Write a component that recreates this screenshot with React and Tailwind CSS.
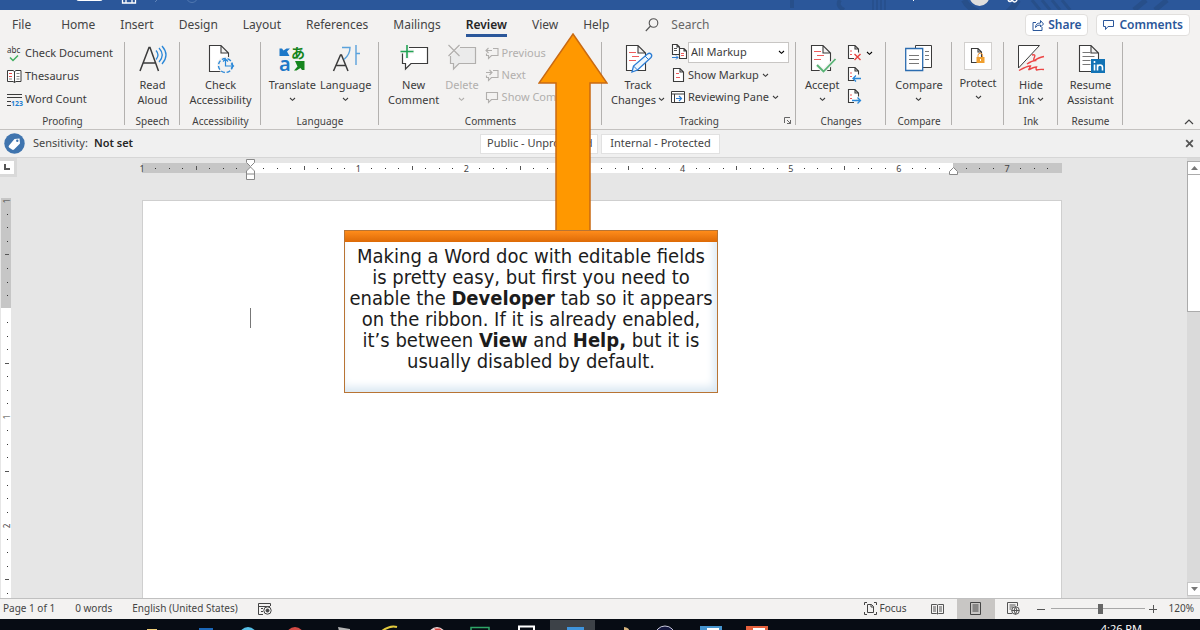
import React from "react";

const ic = "block shrink-0 overflow-visible";

const Chevron = ({ className = "" }) => (
  <svg className={"block shrink-0 " + className} width="7" height="5" viewBox="0 0 7 5" fill="none" stroke="currentColor" strokeWidth="1.1">
    <path d="M1 1l2.5 2.3L6 1" />
  </svg>
);

const Page = ({ x = 0, y = 0, w = 20, h = 26, f = 8, fill = "#fff" }) => (
  <path
    d={`M${x + 0.5} ${y + 0.5}H${x + w - f}L${x + w - 0.5} ${y + f}V${y + h - 0.5}H${x + 0.5}ZM${x + w - f} ${y + 0.5}V${y + f}H${x + w - 0.5}`}
    fill={fill}
    stroke="#3b3b3b"
    strokeWidth="1.1"
  />
);

const Bubble = () => <path d="M1.5 2.5h11v7h-6l-3 3v-3h-2z" />;

const SpellIcon = () => (
  <svg className={ic} width="15" height="16" viewBox="0 0 15 16">
    <text x="0" y="7" fontSize="8" fill="#333" fontFamily="Noto Sans, sans-serif">abc</text>
    <path d="M3 11.5l3 3 5-5" fill="none" stroke="#3fae5f" strokeWidth="1.5" />
  </svg>
);
const BookIcon = () => (
  <svg className={ic} width="15" height="16" viewBox="0 0 15 16" fill="none" stroke="#3b3b3b">
    <path d="M.5 1.500h5.500l1.500 1 1.500-1h5v11h-5l-1.500 1-1.500-1H.5zM7.500 2.500v11" fill="#fff" />
    <path d="M2 4.500h3M2 7.500h3" stroke="#e34b4b" />
    <path d="M9.500 4.500h3M9.500 7.500h3M9.500 10h3M2 10h3" stroke="#888" />
  </svg>
);
const CountIcon = () => (
  <svg className={ic} width="15" height="16" viewBox="0 0 15 16">
    <path d="M0 2.500h15M0 5.500h15M0 9.500h4M0 13.500h4" stroke="#3b3b3b" />
    <text x="4" y="14" fontSize="7" fontWeight="700" fill="#1e7fd0" fontFamily="Noto Sans, sans-serif">123</text>
  </svg>
);
const ReadIcon = () => (
  <svg className={ic} width="28" height="30" viewBox="0 0 28 30" fill="none">
    <path d="M1 27L10 3.500h1L19.500 27M4.500 19h12" stroke="#3b3b3b" strokeWidth="1.500" />
    <path d="M17 6.500q4 4.500 0 9M20 4q6.500 7 0 14M23 2q8 9 0 18" stroke="#2b88d8" strokeWidth="1.300" />
  </svg>
);
const AccessIcon = () => (
  <svg className={ic} width="28" height="30" viewBox="0 0 28 30" fill="none">
    <Page x={2} y={1} w={20} h={27} />
    <circle cx="18.500" cy="21" r="8.500" fill="#f3f2f1" />
    <circle cx="18.500" cy="21.500" r="7" stroke="#2b88d8" strokeWidth="1.400" strokeDasharray="4 1.800" />
    <path d="M18.500 15v7h8M24 19.500l2.500 2.500L24 24.500M16 17.500l2.500-2.500 2.500 2.500" stroke="#2b88d8" strokeWidth="1.200" />
  </svg>
);
const TranslateIcon = () => (
  <svg className={ic} width="28" height="30" viewBox="0 0 28 30">
    <path d="M1.500 4.500h2.500l1.500 2 3-2H12l-3 3 2.500 4.500H1.500z" fill="#1e78c8" />
    <text x="1" y="27" fontSize="20" fontWeight="600" fill="#1e78c8" fontFamily="Noto Sans, sans-serif">a</text>
    <text x="13" y="14" fontSize="14" fontWeight="700" fill="#16851d" fontFamily="Noto Sans CJK JP, sans-serif">あ</text>
    <path d="M17 17h9.500v9h-2.500l-1.500-2-4 2.500h-2.500l3.500-4z" fill="#16851d" />
  </svg>
);
const LanguageIcon = () => (
  <svg className={ic} width="28" height="30" viewBox="0 0 28 30" fill="none">
    <path d="M1.500 27L8.500 11h1L16 27M4 21.500h10" stroke="#3b3b3b" strokeWidth="1.500" />
    <path d="M10 3.500h8q0 7-6 12M24 1v20M24 9.500h4" stroke="#5aa2dc" strokeWidth="1.400" />
  </svg>
);
const NewCommentIcon = () => (
  <svg className={ic} width="30" height="30" viewBox="0 0 30 30" fill="none">
    <path d="M3.500 6.500V19.500H6.500V25L12 19.500H28.500V3.500H9" stroke="#3b3b3b" strokeWidth="1.200" fill="#fff" />
    <path d="M8 0.500v14M1 7.500h14" stroke="#f3f2f1" strokeWidth="4" />
    <path d="M8 1v13M1.500 7.500h13" stroke="#22a355" strokeWidth="1.600" />
  </svg>
);
const DeleteIcon = () => (
  <svg className={ic} width="30" height="30" viewBox="0 0 30 30" fill="none" stroke="#b1afad" strokeWidth="1.200">
    <path d="M3.500 12V19.500H6.500V25L12 19.500H28.500V3.500H13" fill="#ebebeb" />
    <path d="M1.500 1l11 11M12.500 1l-11 11" />
  </svg>
);
const SmallBubble = ({ kind }) => (
  <svg className={ic} width="14" height="15" viewBox="0 0 14 15" fill="none" stroke="#b1afad" strokeWidth="1.100">
    {kind === "show" ? (
      <Bubble />
    ) : (
      <path d="M8 2.500h5v7H6.500l-3 3v-3h-2v-2" />
    )}
    {kind === "prev" && <path d="M1 4.500h6M3.500 2L1 4.500 3.500 7" />}
    {kind === "next" && <path d="M1 4.500h6M4.500 2L7 4.500 4.500 7" />}
  </svg>
);
const TrackIcon = () => (
  <svg className={ic} width="28" height="30" viewBox="0 0 28 30" fill="none">
    <Page x={2} y={1} w={20} h={26} />
    <path d="M5 8.500h7M8 12.500h7M5 16.500h7" stroke="#ee5c5c" />
    <path d="M8 28l1.500-6L23.500 10q2-1.500 3.500 0t0 3.500L13.500 26z" fill="#eef6fd" stroke="#2b7cd3" strokeWidth="1.300" />
    <path d="M9.500 22l4 4M21 12l4 4" stroke="#2b7cd3" />
  </svg>
);
const MarkupIcon = () => (
  <svg className={ic} width="16" height="18" viewBox="0 0 16 18" fill="none">
    <g transform="translate(0 2)">
      <Page x={1} y={0} w={8} h={11} f={3} />
      <path d="M3 4.500h3M3 6.500h3" stroke="#555" />
      <Page x={8} y={4} w={8} h={11} f={3} />
      <path d="M10 9.500h3M10 11.500h3" stroke="#ee5c5c" />
      <path d="M1 13.500h6M5 11.500l2 2-2 2" stroke="#2b7cd3" />
    </g>
  </svg>
);
const ShowIcon = () => (
  <svg className={ic} width="14" height="16" viewBox="0 0 14 16" fill="none">
    <Page x={2} y={1} w={11} h={14} f={4} />
    <path d="M5 6.500h3M5 10.500h4" stroke="#ee5c5c" />
  </svg>
);
const PaneIcon = () => (
  <svg className={ic} width="14" height="16" viewBox="0 0 14 16" fill="none">
    <path d="M.5 2.500h13v11H.5z" fill="#fff" stroke="#3b3b3b" />
    <path d="M.5 5h13M3.500 5v8.500" stroke="#3b3b3b" />
    <path d="M5 9.500h5M8 7l2.500 2.500L8 12" stroke="#2b7cd3" strokeWidth="1.200" />
  </svg>
);
const AcceptIcon = () => (
  <svg className={ic} width="28" height="30" viewBox="0 0 28 30" fill="none">
    <Page x={3} y={1} w={20} h={26} />
    <path d="M6 7.500h7M9 11.500h7M6 15.500h7" stroke="#ee5c5c" />
    <path d="M9 21l6.500 6.500L27.500 15" stroke="#f3f2f1" strokeWidth="4" />
    <path d="M9 21l6.500 6.500L27.500 15" stroke="#57b374" strokeWidth="1.800" />
  </svg>
);
const ChangeIcon = ({ kind }) => (
  <svg className={ic} width="15" height="16" viewBox="0 0 15 16" fill="none">
    <path d="M7 13.500H1.500V.5H8L11.500 4V7.500M8 .5V4h3.500" fill="#fff" stroke="#3b3b3b" strokeWidth="1.100" />
    <path d="M3 6h2M3 9.500h2" stroke="#ee5c5c" />
    {kind === "x" && <path d="M7.500 9l6 6M13.500 9l-6 6" stroke="#e8423f" strokeWidth="1.400" />}
    {kind === "l" && <path d="M14 11.500H6M9 8.500l-3 3 3 3" stroke="#2b88d8" strokeWidth="1.300" />}
    {kind === "r" && <path d="M5 11.500h8.500M10.500 8.500l3 3-3 3" stroke="#2b88d8" strokeWidth="1.300" />}
  </svg>
);
const CompareIcon = () => (
  <svg className={ic} width="28" height="30" viewBox="0 0 28 30" fill="none">
    <path d="M10.500 1.500h16v22h-16z" fill="#fff" stroke="#3b3b3b" />
    <path d="M20 7.500h4M20 11.500h4M20 15.500h4" stroke="#777" />
    <path d="M.7 4.500h17v22H.7z" fill="#fff" stroke="#2b6cb0" strokeWidth="1.300" />
    <path d="M4 11.500h10M4 15.500h10M4 19.500h10" stroke="#777" />
  </svg>
);
const ProtectIcon = () => (
  <svg className={ic} width="16" height="18" viewBox="0 0 16 18" fill="none">
    <Page x={1} y={1} w={11} h={15} f={4} />
    <path d="M8 10V8.500a2.300 2.300 0 0 1 4.600 0V10" stroke="#e8912d" />
    <rect x="6.500" y="10" width="8" height="6" fill="#f0a030" />
    <path d="M10.500 12v2" stroke="#fff" />
  </svg>
);
const InkIcon = () => (
  <svg className={ic} width="28" height="30" viewBox="0 0 28 30" fill="none">
    <path d="M1.500 1.500h21L1.500 24z" fill="#fff" stroke="#3b3b3b" />
    <path d="M15 11q4-1 2.500 2t0 3.500q3-2.500 9.500-4M10 20q6-4 9.500-3.500M2 26.500q9-5 11.500-4.500-1 2.500-2 4 5-3 8-3-1 2 0 3 3-1 7.500-.5" stroke="#ec4545" strokeWidth="1.400" />
  </svg>
);
const ResumeIcon = () => (
  <svg className={ic} width="28" height="30" viewBox="0 0 28 30" fill="none">
    <Page x={2} y={1} w={20} h={27} />
    <path d="M5.500 8.500h8M5.500 12.500h12M5.500 16.500h8M5.500 20.500h8" stroke="#777" />
    <rect x="14" y="15" width="14" height="14" fill="#1273b5" />
    <path d="M17.500 20.500v6M17.500 17v2M20.500 26.500v-6M20.500 23.500q0-2.500 2.500-2.500t2.500 2.500v3" stroke="#fff" strokeWidth="1.600" />
  </svg>
);

function Group({ label, width, children, corner }) {
  return (
    <section className={"relative flex shrink-0 flex-col " + width} aria-label={label || "Protect"}>
      <div className="flex h-[73px] items-start justify-center">{children}</div>
      <div className="flex h-4 items-center justify-center text-[10px] text-[#3f3f3f]">{label}</div>
      {corner && (
        <svg className="absolute right-1 bottom-1" width="9" height="9" viewBox="0 0 9 9" fill="none" stroke="#666">
          <path d="M1.500 7V1.500H7M4 4l3.500 3.500M7.500 4v3.500H4" />
        </svg>
      )}
      <div className="absolute top-0.5 right-0 h-[83px] w-px bg-[#b3b1af]" />
    </section>
  );
}

function Big({ icon, l1, l2, chev, inlineChev, disabled }) {
  return (
    <button className={"flex flex-col items-center whitespace-nowrap text-[11px] leading-[15px] " + (disabled ? "text-[#b1afad]" : "text-[#3b3b3b]")} disabled={disabled}>
      <span className="flex h-[37px] items-start pt-1">{icon}</span>
      <span>{l1}</span>
      {l2 && (
        <span className="flex items-center gap-0.5">
          {l2}
          {inlineChev && <Chevron />}
        </span>
      )}
      {chev && <Chevron className="mt-[5px]" />}
    </button>
  );
}

function Small({ icon, children, chev, disabled, tall }) {
  return (
    <button
      className={
        "flex items-center gap-[3px] whitespace-nowrap text-[11px] " +
        (tall ? "h-[23px] " : "h-[22px] ") +
        (disabled ? "text-[#b1afad]" : "text-[#3b3b3b]")
      }
      disabled={disabled}
    >
      {icon}
      {children}
      {chev && <Chevron />}
    </button>
  );
}

const tabs = ["File", "Home", "Insert", "Design", "Layout", "References", "Mailings", "Review", "View", "Help"];

function TitleBar() {
  return (
    <header className="flex h-2.5 shrink-0 items-start overflow-hidden bg-[#2b579a]">
      <svg width="220" height="10" viewBox="0 0 220 10" fill="none">
        <rect x="76" y="-6" width="27" height="7" rx="3" fill="#fff" />
        <path d="M122.500-4v7h13v-7M126 3V-1h6v4" stroke="#fff" strokeWidth="1.300" />
        <path d="M155 2l2-2" stroke="#5f83b8" />
        <circle cx="192" cy="-3" r="5.500" stroke="#5077b0" />
      </svg>
      <div className="grow" />
      <svg width="420" height="10" viewBox="780 0 420 10" fill="none">
        <path d="M792 0v8M840 0q-4 6 4 10" stroke="#274f8a" strokeWidth="4" />
        <path d="M873 0v10M877 0v10M881 0v10M885 0v10" stroke="#274f8a" strokeWidth="1.500" />
        <path d="M964 0q4 8 14 12M1018 0q-4 7-10 12" stroke="#274f8a" strokeWidth="6" />
        <path d="M1032 0l8 10M1042 0l8 10M1052 0l8 10M1062 0l8 10" stroke="#274f8a" strokeWidth="3" />
        <path d="M1134 10l12-10M1155 10l12-10" stroke="#274f8a" strokeWidth="5" />
        <circle cx="979.500" cy="-4" r="10" fill="#e0dfde" />
        <path d="M913 0l1 1" stroke="#fff" />
        <path d="M1008 0q2 3 4 0 3 4 5 0" stroke="#fff" strokeWidth="1.500" />
      </svg>
    </header>
  );
}

function TabRow() {
  return (
    <div className="flex h-[30px] shrink-0 items-center pl-3 text-[12px] text-[#444]">
      <nav className="flex items-center gap-[25px]">
        {tabs.map((t) => (
          <button
            key={t}
            className={
              "flex h-6 items-center border-b-[3px] pt-0.5 " +
              (t === "File" ? "mr-[5px] " : "") +
              (t === "Review" ? "border-[#2b579a] font-semibold text-[#262626]" : "border-transparent")
            }
          >
            {t}
          </button>
        ))}
      </nav>
      <label className="ml-9 flex items-center gap-3">
        <svg width="14" height="14" viewBox="0 0 14 14" fill="none" stroke="#555" strokeWidth="1.100">
          <circle cx="8.500" cy="5" r="4.300" />
          <path d="M5.500 8L.8 13" />
        </svg>
        <input className="w-24 bg-transparent outline-none placeholder:text-[#666]" placeholder="Search" aria-label="Search" />
      </label>
      <div className="grow" />
      <div className="mr-2.5 flex gap-2 font-semibold text-[#2b579a]">
        <button className="flex h-[22px] items-center gap-1 rounded-sm border border-[#e1dfdd] bg-white px-1.5">
          <svg width="12" height="12" viewBox="0 0 12 12" fill="none" stroke="#2b579a">
            <path d="M4 3.500H1v8h9V8M3.500 8.500q0-4.500 5-4.500V1.500l3 3.500-3 3V6q-3-.5-5 2.500z" />
          </svg>
          Share
        </button>
        <button className="flex h-[22px] items-center gap-1 rounded-sm border border-[#e1dfdd] bg-white px-1.5">
          <svg width="12" height="12" viewBox="0 0 12 12" fill="none" stroke="#2b579a">
            <path d="M.5 1.500h10v6H5l-2.500 3v-3h-2z" />
          </svg>
          Comments
        </button>
      </div>
    </div>
  );
}

function Ribbon() {
  return (
    <div className="relative flex h-[90px] shrink-0 border-b border-[#c4c2c0]">
      <Group label="Proofing" width="w-[125px]">
        <div className="flex grow flex-col items-start pt-0.5 pl-[7px]">
          <Small tall icon={<SpellIcon />}>Check Document</Small>
          <Small tall icon={<BookIcon />}>Thesaurus</Small>
          <Small tall icon={<CountIcon />}>Word Count</Small>
        </div>
      </Group>
      <Group label="Speech" width="w-[55px]">
        <Big icon={<ReadIcon />} l1="Read" l2="Aloud" />
      </Group>
      <Group label="Accessibility" width="w-[81px]">
        <Big icon={<AccessIcon />} l1="Check" l2="Accessibility" />
      </Group>
      <Group label="Language" width="w-[118px]">
        <div className="flex gap-1">
          <Big icon={<TranslateIcon />} l1="Translate" chev />
          <Big icon={<LanguageIcon />} l1="Language" chev />
        </div>
      </Group>
      <Group label="Comments" width="w-[223px]">
        <div className="flex grow gap-1.5 pl-[9px]">
          <Big icon={<NewCommentIcon />} l1="New" l2="Comment" />
          <Big icon={<DeleteIcon />} l1="Delete" chev disabled />
          <div className="flex flex-col pt-0.5">
            <Small icon={<SmallBubble kind="prev" />} disabled>Previous</Small>
            <Small icon={<SmallBubble kind="next" />} disabled>Next</Small>
            <Small icon={<SmallBubble kind="show" />} disabled>Show Comments</Small>
          </div>
        </div>
      </Group>
      <Group label="Tracking" width="w-[194px]" corner>
        <div className="flex grow gap-1.5 pl-[9px]">
          <Big icon={<TrackIcon />} l1="Track" l2="Changes" inlineChev />
          <div className="flex flex-col pt-0.5">
            <div className="flex h-[22px] items-start gap-px">
              <MarkupIcon />
              <div className="relative">
                <select aria-label="Display for review" className="block h-[21px] w-[101px] appearance-none border border-[#c8c6c4] bg-white pl-0.5 text-[11px] text-[#3b3b3b]">
                  <option>All Markup</option>
                </select>
                <Chevron className="pointer-events-none absolute top-2 right-1" />
              </div>
            </div>
            <Small icon={<ShowIcon />} chev>Show Markup</Small>
            <Small icon={<PaneIcon />} chev>Reviewing Pane</Small>
          </div>
        </div>
      </Group>
      <Group label="Changes" width="w-[90px]">
        <div className="flex grow gap-[7px] pl-[9px]">
          <Big icon={<AcceptIcon />} l1="Accept" chev />
          <div className="flex flex-col pt-0.5">
            <button aria-label="Reject" className="flex h-[22px] items-center gap-1"><ChangeIcon kind="x" /><Chevron /></button>
            <button aria-label="Previous change" className="flex h-[22px] items-center"><ChangeIcon kind="l" /></button>
            <button aria-label="Next change" className="flex h-[22px] items-center"><ChangeIcon kind="r" /></button>
          </div>
        </div>
      </Group>
      <Group label="Compare" width="w-[66px]">
        <Big icon={<CompareIcon />} l1="Compare" chev />
      </Group>
      <Group width="w-[52px]">
        <button className="flex flex-col items-center pt-0.5 text-[11px] leading-[15px] text-[#3b3b3b]">
          <span className="mb-[5px] flex h-7 w-7 items-center justify-center border border-[#d2d0ce] bg-white"><ProtectIcon /></span>
          Protect
          <Chevron className="mt-[5px]" />
        </button>
      </Group>
      <Group label="Ink" width="w-[54px]">
        <Big icon={<InkIcon />} l1="Hide" l2="Ink" inlineChev />
      </Group>
      <Group label="Resume" width="w-[65px]">
        <Big icon={<ResumeIcon />} l1="Resume" l2="Assistant" />
      </Group>
      <button aria-label="Collapse ribbon" className="mt-auto mr-1.5 mb-1 ml-auto">
        <svg width="10" height="6" viewBox="0 0 10 6" fill="none" stroke="#444" strokeWidth="1.200"><path d="M1 5l4-4 4 4" /></svg>
      </button>
    </div>
  );
}

function SensitivityBar() {
  return (
    <div className="grid h-7 shrink-0 grid-cols-[1fr_auto_1fr] items-center border-b border-[#d6d6d6] bg-[#f0f0f0] text-[11px] text-[#444]">
      <div className="flex items-center pl-1">
        <svg width="21" height="21" viewBox="0 0 21 21">
          <circle cx="10.500" cy="10.500" r="10.200" fill="#3f74ae" />
          <path d="M5 12.500l5.500-6.500 5-.5.5 5-6 6q-1 .8-2 0L5 14.500q-.8-1 0-2z" fill="#fff" />
          <circle cx="13.300" cy="7.800" r="1.200" fill="#3f74ae" />
        </svg>
        <span className="ml-2">Sensitivity:</span>
        <span className="ml-1.5 font-semibold text-[#262626]">Not set</span>
      </div>
      <div className="flex gap-[3px]">
        <button className="h-5 w-[118px] border border-[#e1e1e1] bg-white pl-1.5 text-left whitespace-nowrap">Public - Unprotected</button>
        <button className="h-5 w-[119px] border border-[#e1e1e1] bg-white whitespace-nowrap">Internal - Protected</button>
      </div>
      <button aria-label="Close" className="mr-1.5 ml-auto">
        <svg width="9" height="9" viewBox="0 0 9 9" stroke="#555" strokeWidth="1.800"><path d="M1.200 1.200l6.600 6.600M7.800 1.200L1.200 7.800" /></svg>
      </button>
    </div>
  );
}

function Mark({ k, vertical }) {
  const edge = k % 8 === 0;
  const half = k % 4 === 0;
  const n = Math.abs(k / 8 - 1);
  if (k === 8 || k === 60 || k === 68) return <i className={vertical ? "h-0" : "w-0"} />;
  return (
    <span className={"flex shrink-0 items-center justify-center overflow-visible " + (vertical ? "h-0 w-full" : "h-full w-0")}>
      {edge ? (
        <span className={"text-[#444] " + (vertical ? "-rotate-90 text-[8px] leading-[8px]" : "text-[9px] leading-[9px]")}>{n}</span>
      ) : half ? (
        <i className={"block shrink-0 bg-[#555] " + (vertical ? "h-px w-1" : "h-1 w-px")} />
      ) : (
        <i className="block h-px w-px shrink-0 bg-[#333]" />
      )}
    </span>
  );
}

function Workspace() {
  const hMarks = Array.from({ length: 69 }, (_, i) => i);
  const vMarks = Array.from({ length: 33 }, (_, i) => i);
  return (
    <main className="flex min-h-0 grow bg-[#e6e6e6]">
      <div className="flex w-[17px] shrink-0 flex-col">
        <button aria-label="Tab stop" className="flex h-5 w-[17px] items-center justify-center border-[3px] border-l-0 border-[#d9d9d9] bg-white">
          <svg width="6" height="6" viewBox="0 0 6 6" fill="none" stroke="#555" strokeWidth="2"><path d="M1 0v5h5" /></svg>
        </button>
        <div className="mt-[21px] ml-px min-h-0 w-2.5 grow overflow-hidden bg-white">
          <div className="flex h-[436px] flex-col justify-between bg-[linear-gradient(#c6c6c6_110px,#fff_110px)] pt-[3px] pl-0.5">
            {vMarks.map((k) => <Mark key={k} k={k} vertical />)}
          </div>
        </div>
      </div>
      <div className="flex min-w-0 grow flex-col items-center">
        <div className="relative mt-[5px] h-[10px] w-[920px]">
          <div className="flex h-full justify-between bg-[linear-gradient(90deg,#c6c6c6_108px,#fff_108px,#fff_811px,#c6c6c6_811px)]">
            {hMarks.map((k) => <Mark key={k} k={k} />)}
          </div>
          <svg className="absolute -top-1 left-[104px]" width="9" height="22" viewBox="0 0 9 22" fill="#fff" stroke="#888">
            <path d="M.5.500h8v3l-4 4-4-4zM4.500 8l4 4v8.500h-8V12zM.500 15h8" />
          </svg>
          <svg className="absolute top-1 left-[807px]" width="9" height="8" viewBox="0 0 9 8" fill="#fff" stroke="#888">
            <path d="M4.500.500l4 4v3h-8v-3z" />
          </svg>
        </div>
        <article className="mt-[27px] w-[920px] grow border border-b-0 border-[#cfcfcf] bg-white pt-[107px] pl-[107px]">
          <div className="h-5 w-px bg-[#777]" />
        </article>
      </div>
      <div className="flex w-[13px] shrink-0 flex-col bg-[#dadada] pt-[3px]">
        <button aria-label="Scroll up" className="flex h-3.5 items-center justify-center border border-r-0 border-[#ababab] bg-white">
          <svg width="7" height="4" viewBox="0 0 7 4" fill="#777"><path d="M0 4l3.500-4L7 4z" /></svg>
        </button>
        <div className="h-[137px] border border-t-0 border-r-0 border-[#ababab] bg-white" />
        <div className="grow" />
        <button aria-label="Scroll down" className="mb-0.5 flex h-3.5 items-center justify-center border border-r-0 border-[#c6c6c6] bg-white">
          <svg width="7" height="4" viewBox="0 0 7 4" fill="#777"><path d="M0 0l3.500 4L7 0z" /></svg>
        </button>
      </div>
    </main>
  );
}

function StatusBar() {
  return (
    <footer className="flex h-[21px] shrink-0 items-center border-t border-[#c0c0c0] bg-[#f3f2f1] pb-px text-[10px] text-[#444]">
      <span className="ml-[3px]">Page 1 of 1</span>
      <span className="ml-5">0 words</span>
      <span className="ml-5">English (United States)</span>
      <svg className="ml-5" width="14" height="12" viewBox="0 0 14 12" fill="none" stroke="#444">
        <path d="M5 11.500H.5V.500h12V3M1 3.500h11M3 5.500h2M3 8.500h2" />
        <circle cx="9.500" cy="7.500" r="3.700" fill="#f3f2f1" />
        <circle cx="9.500" cy="7.500" r="1.500" fill="#444" />
      </svg>
      <div className="grow" />
      <button className="mr-3 flex items-center gap-[3px]">
        <svg width="13" height="13" viewBox="0 0 13 13" fill="none" stroke="#444">
          <path d="M.5 3V.500H3M10 .5h2.500V3M.5 10v2.500H3M10 12.500h2.500V10M3.500 2.500h4l2 2v6h-6zM7 2.500V5h2.500" />
        </svg>
        Focus
      </button>
      <button aria-label="Read mode" className="flex h-5 w-[38px] items-center justify-center">
        <svg width="13" height="12" viewBox="0 0 13 12" fill="none" stroke="#555">
          <path d="M.5 1.500h5l1 .5 1-.5h5v9h-5l-1 .5-1-.5h-5zM6.500 2v9M2 4h3M2 6h3M2 8h3M8 4h3M8 6h3M8 8h3" />
        </svg>
      </button>
      <button aria-label="Print layout" className="flex h-5 w-[38px] items-center justify-center bg-[#c8c6c4]">
        <svg width="11" height="13" viewBox="0 0 11 13" fill="none" stroke="#444">
          <path d="M.5.500h10v12H.5zM2.500 3h6M2.500 5h6M2.500 7h6M2.500 9h6" />
        </svg>
      </button>
      <button aria-label="Web layout" className="flex h-5 w-[38px] items-center justify-center">
        <svg width="13" height="13" viewBox="0 0 13 13" fill="none" stroke="#555">
          <path d="M5 11.500H.5V.500h10V4M2.500 3h6M2.500 5h4M2.500 7h2" />
          <circle cx="8.500" cy="8.500" r="3.800" fill="#f3f2f1" />
          <path d="M4.700 8.500h7.600M8.500 4.700q-3 3.800 0 7.600 3-3.800 0-7.600" />
        </svg>
      </button>
      <button aria-label="Zoom out" className="ml-1">
        <svg width="8" height="8" viewBox="0 0 8 8" stroke="#555"><path d="M0 4.500h8" /></svg>
      </button>
      <input
        type="range"
        aria-label="Zoom"
        min="0"
        max="100"
        defaultValue="53"
        className="mr-1 ml-1.5 h-3 w-[94px] appearance-none bg-[linear-gradient(transparent_5px,#a8a8a8_5px,#a8a8a8_6px,transparent_6px)] [&::-webkit-slider-thumb]:h-2.5 [&::-webkit-slider-thumb]:w-[5px] [&::-webkit-slider-thumb]:appearance-none [&::-webkit-slider-thumb]:bg-[#666]"
      />
      <button aria-label="Zoom in">
        <svg width="8" height="8" viewBox="0 0 8 8" stroke="#555"><path d="M0 4.500h8M4.500 0v8" /></svg>
      </button>
      <span className="mr-1.5 ml-3">120%</span>
    </footer>
  );
}

function Taskbar() {
  return (
    <div className="flex h-[11px] shrink-0 justify-between overflow-hidden bg-[#070c14]">
      <svg width="800" height="11" viewBox="0 0 800 11" fill="none">
        <path d="M147 10h10v2h-10z" fill="#f0cf7a" />
        <path d="M199 9h14v3h-14z" fill="#1b67b8" />
        <circle cx="248" cy="17" r="9" fill="#57bfe6" />
        <circle cx="295" cy="17" r="9" fill="#d34a45" />
        <path d="M338 8l12 2v2h-11z" fill="#b4b4b4" />
        <path d="M382 12q8-6 15-4" stroke="#e2c93d" strokeWidth="2" />
        <circle cx="437" cy="17" r="9" fill="#e9d7d7" />
        <path d="M434 9.500h6l2 2h-6z" fill="#d8443f" />
        <path d="M471 12V8.500h18V12" stroke="#2fa567" strokeWidth="1.500" />
        <path d="M519 12V7.500h15V12" stroke="#fff" strokeWidth="2" />
        <path d="M550 1h45v10h-45z" fill="#3d4248" />
        <path d="M567 8h17v3h-17z" fill="#3f94dc" />
        <path d="M624 8q5 1 5 3h-5z" fill="#d5b27c" />
        <circle cx="665" cy="17" r="10" stroke="#c9c9dc" fill="#15183f" />
        <path d="M700 7h22v4h-22z" fill="#4695cf" />
        <path d="M746 7h22v4h-22z" fill="#e5603c" />
        <path d="M707 9h12v2h-12zM753 9h12v2h-12z" fill="#fff" />
      </svg>
      <span className="mt-[3px] mr-[58px] text-[11px] leading-[14px] text-white">4:26 PM</span>
    </div>
  );
}

function Callout() {
  return (
    <aside className="pointer-events-none absolute top-[33px] left-[344px] w-[374px]">
      <svg className="ml-[194px] block" width="70" height="197" viewBox="0 0 70 197">
        <path d="M35 1L69 50H52V198H18V50H1z" fill="#ff9800" stroke="#c96a12" strokeWidth="1.500" />
      </svg>
      <div className="border border-[#b87434] bg-white shadow-[inset_-3px_-5px_8px_#d9e7f2]">
        <div className="h-[11px] bg-linear-to-b from-[#ff8c1a] to-[#dd6a06]" />
        <p className="h-[150px] pt-1 text-center font-['DejaVu_Sans_Condensed','Noto_Sans',sans-serif] text-[20px] leading-[21px] whitespace-nowrap text-[#1c1c1c]">
          Making a Word doc with editable fields<br />
          is pretty easy, but first you need to<br />
          enable the <b>Developer</b> tab so it appears<br />
          on the ribbon. If it is already enabled,<br />
          it’s between <b>View</b> and <b>Help,</b> but it is<br />
          usually disabled by default.
        </p>
      </div>
    </aside>
  );
}

export default function App() {
  return (
    <div className="relative flex h-screen flex-col overflow-hidden bg-[#f3f2f1] font-['Noto_Sans','Noto_Sans_CJK_JP',sans-serif]">
      <TitleBar />
      <TabRow />
      <Ribbon />
      <SensitivityBar />
      <Workspace />
      <StatusBar />
      <Taskbar />
      <Callout />
    </div>
  );
}
